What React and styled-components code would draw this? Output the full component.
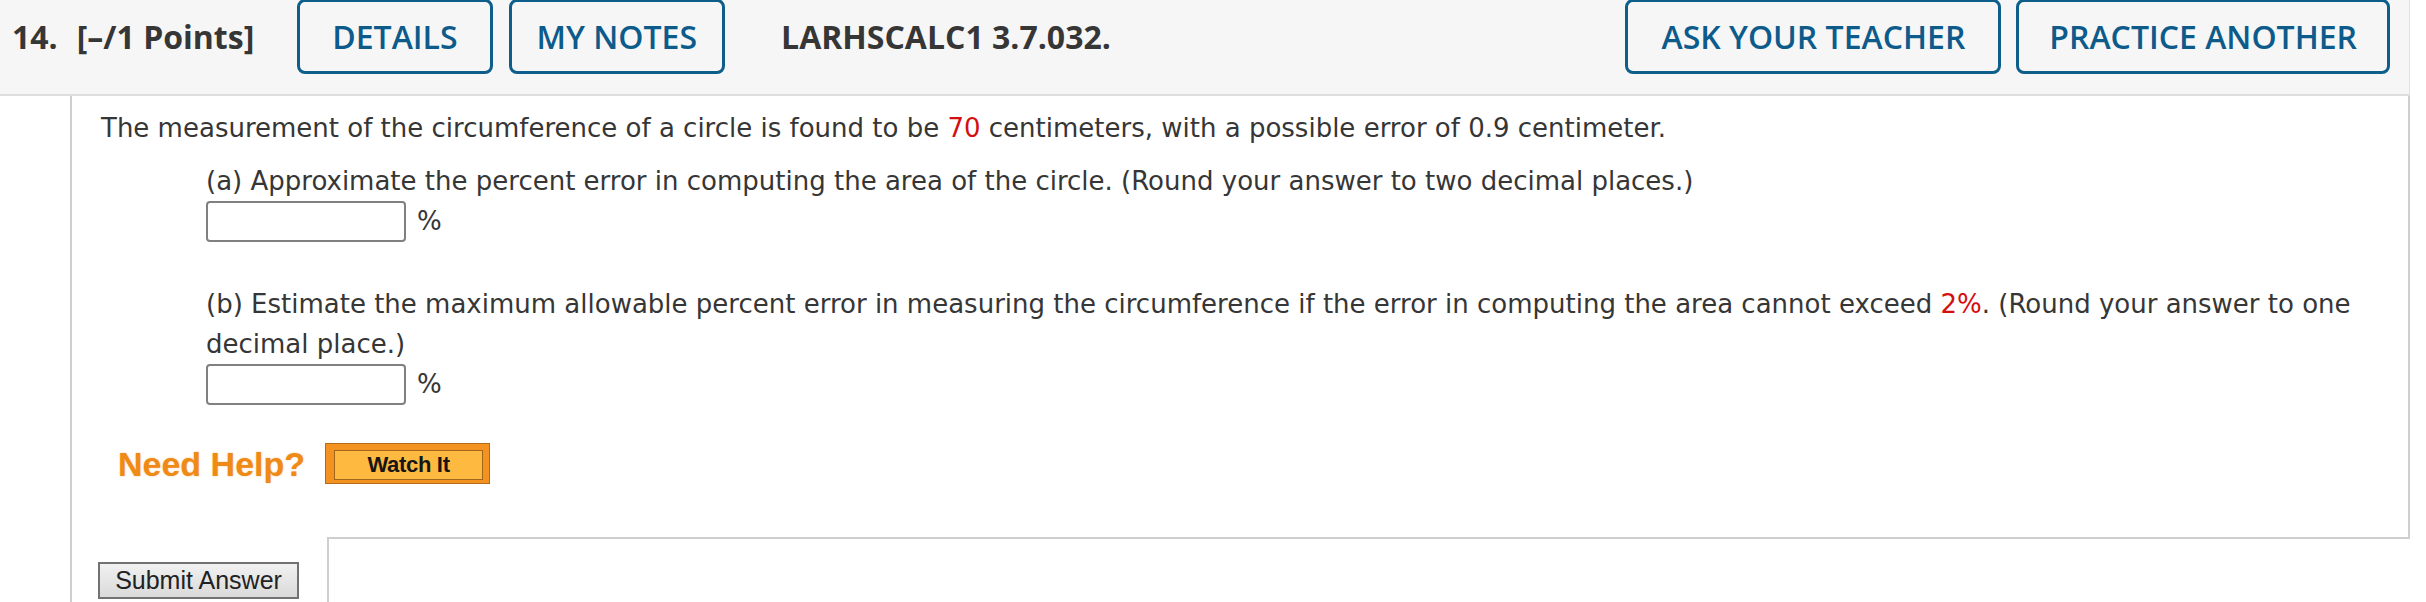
import React from "react";
import styled, { createGlobalStyle } from "styled-components";

const Global = createGlobalStyle`
  html, body { margin: 0; padding: 0; background: #fff; }
  * { box-sizing: border-box; }
`;

const Page = styled.div`
  width: calc(100% - 16px);
`;

const Header = styled.header`
  display: flex;
  align-items: center;
  height: 96px;
  padding: 0 19px 21px 12px;
  background: #f6f6f6;
  border-bottom: 2px solid #dedede;
  border-right: 1px solid #e2e2e2;
  font-family: "Open Sans", sans-serif;
  font-size: 32px;
  color: #363636;
`;

const Title = styled.div`
  display: flex;
  align-items: center;
  gap: 19px;
  font-weight: 700;
  margin-right: 43px;
  white-space: nowrap;
`;

const Code = styled.div`
  font-weight: 700;
  margin-left: 56px;
  white-space: nowrap;
`;

const HeadButton = styled.button`
  height: 75px;
  padding: 0 ${(p) => p.$pad || 36}px;
  margin-left: ${(p) => p.$ml || 0}px;
  border: 3px solid #0e5e8c;
  border-radius: 8px;
  background: transparent;
  color: #0c5b8b;
  font-family: "Open Sans", sans-serif;
  font-weight: 600;
  font-size: 32px;
  white-space: nowrap;
  cursor: pointer;
`;

const Spacer = styled.div`
  flex: 1;
`;

const Body = styled.div`
  margin-left: 70px;
  border-left: 2px solid #cfcfcf;
`;

const Panel = styled.section`
  padding: 12px 10px 53px 29px;
  border-right: 2px solid #cfcfcf;
  font-family: "DejaVu Sans", Verdana, sans-serif;
  font-size: 26px;
  line-height: 40px;
  color: #363636;
`;

const Text = styled.p`
  margin: 0 0 ${(p) => p.$mb || 0}px;
`;

const Red = styled.span`
  color: #d40f0f;
`;

const Part = styled.div`
  margin-left: 105px;
  margin-bottom: ${(p) => p.$mb || 0}px;
`;

const AnswerRow = styled.div`
  display: flex;
  align-items: center;
  gap: 11px;
`;

const Input = styled.input`
  width: 200px;
  height: 41px;
  border: 2px solid #808080;
  border-radius: 4px;
  background: #fff;
  font: inherit;
  padding: 0 6px;
`;

const Unit = styled.span`
  line-height: 41px;
`;

const HelpRow = styled.div`
  display: flex;
  align-items: center;
  gap: 20px;
  margin: 38px 0 0 17px;
`;

const NeedHelp = styled.span`
  font-family: "Liberation Sans", Arial, sans-serif;
  font-weight: 700;
  font-size: 34px;
  color: #ef8a17;
  text-shadow: 0 0 2px rgba(239, 138, 23, 0.45);
  white-space: nowrap;
`;

const WatchOuter = styled.button`
  display: flex;
  width: 165px;
  height: 41px;
  padding: 6px 6px 3px 8px;
  background: #f39221;
  border: 1px solid #b56a17;
  cursor: pointer;
`;

const WatchInner = styled.span`
  flex: 1;
  display: flex;
  align-items: center;
  justify-content: center;
  background: #fdb940;
  border: 1px solid #a0671a;
  font-family: "Liberation Sans", Arial, sans-serif;
  font-weight: 700;
  font-size: 22px;
  letter-spacing: -0.3px;
  color: #161616;
`;

const Footer = styled.div`
  display: flex;
  align-items: flex-start;
  height: 80px;
`;

const SubmitCell = styled.div`
  padding: 25px 28px 0 26px;
`;

const SubmitButton = styled.button`
  width: 201px;
  height: 37px;
  padding: 0;
  border: 2px solid #727272;
  background: linear-gradient(#f1f1f1, #dadada);
  font-family: "Liberation Sans", Arial, sans-serif;
  font-size: 25px;
  color: #222;
  cursor: pointer;
`;

const FooterBox = styled.div`
  flex: 1;
  height: 100%;
  border-top: 2px solid #cfcfcf;
  border-left: 2px solid #cfcfcf;
`;

export default function App() {
  return (
    <Page>
      <Global />
      <Header>
        <Title>
          <span>14.</span>
          <span>[–/1 Points]</span>
        </Title>
        <HeadButton $pad={32}>DETAILS</HeadButton>
        <HeadButton $pad={25} $ml={16}>MY NOTES</HeadButton>
        <Code>LARHSCALC1 3.7.032.</Code>
        <Spacer />
        <HeadButton $pad={33}>ASK YOUR TEACHER</HeadButton>
        <HeadButton $pad={30} $ml={15}>PRACTICE ANOTHER</HeadButton>
      </Header>
      <Body>
        <Panel>
          <Text $mb={13}>
            The measurement of the circumference of a circle is found to be <Red>70</Red> centimeters, with a possible error of 0.9 centimeter.
          </Text>
          <Part $mb={42}>
            <Text>(a) Approximate the percent error in computing the area of the circle. (Round your answer to two decimal places.)</Text>
            <AnswerRow>
              <Input type="text" aria-label="answer a" />
              <Unit>%</Unit>
            </AnswerRow>
          </Part>
          <Part>
            <Text>
              {"(b) Estimate the maximum allowable percent error in measuring the circumference if the error in computing the area cannot exceed "}
              <Red>2%</Red>
              {". (Round your answer to one "}
              {"decimal place.)"}
            </Text>
            <AnswerRow>
              <Input type="text" aria-label="answer b" />
              <Unit>%</Unit>
            </AnswerRow>
          </Part>
          <HelpRow>
            <NeedHelp>Need Help?</NeedHelp>
            <WatchOuter>
              <WatchInner>Watch It</WatchInner>
            </WatchOuter>
          </HelpRow>
        </Panel>
        <Footer>
          <SubmitCell>
            <SubmitButton>Submit Answer</SubmitButton>
          </SubmitCell>
          <FooterBox />
        </Footer>
      </Body>
    </Page>
  );
}
